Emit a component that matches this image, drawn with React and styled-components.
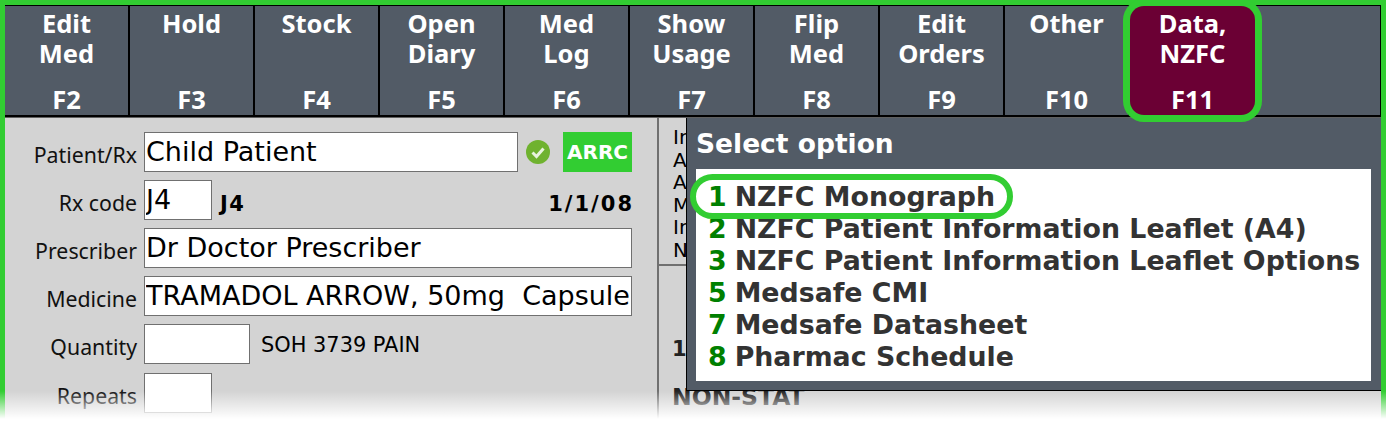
import React from "react";
import styled, { createGlobalStyle } from "styled-components";

const GREEN = "#32cd32";
const SLATE = "#525b66";

const Global = createGlobalStyle`
  html, body {
    margin: 0;
    padding: 0;
    background: white;
  }
`;

const Shell = styled.div`
  position: relative;
  width: 1386px;
  height: 422px;
  overflow: hidden;
`;

const Frame = styled.div`
  position: relative;
  height: 100%;
  box-sizing: border-box;
  display: flex;
  flex-direction: column;
  border: 5px solid ${GREEN};
  border-bottom: none;
  background: #d3d3d3;
  font-family: "DejaVu Sans", Verdana, sans-serif;
  color: black;
`;

const Toolbar = styled.div`
  display: flex;
  flex: none;
  height: 112px;
  box-sizing: border-box;
  background: ${SLATE};
  border-top: 1px solid black;
  border-right: 1px solid black;
  border-bottom: 2px solid black;
`;

const KeyButton = styled.div`
  position: relative;
  box-sizing: border-box;
  width: 125px;
  height: 109px;
  padding: 2px 0 1px;
  display: flex;
  flex-direction: column;
  justify-content: space-between;
  align-items: center;
  text-align: center;
  white-space: pre-line;
  font-family: "Noto Sans", sans-serif;
  font-weight: 700;
  font-size: 25.5px;
  line-height: 30px;
  color: white;
  border-right: ${(p) => (p.$active ? "none" : "2px solid black")};
  background: ${(p) => (p.$active ? "#6b0034" : "transparent")};
  border-radius: ${(p) => (p.$active ? "14px" : "0")};
  box-shadow: ${(p) => (p.$active ? `0 0 0 7px ${GREEN}` : "none")};
  z-index: ${(p) => (p.$active ? 2 : 0)};
`;

const Body = styled.div`
  flex: 1;
  display: flex;
  min-height: 0;
  border-top: 1px solid #606060;
`;

const FormPanel = styled.div`
  flex: none;
  width: 654px;
  box-sizing: border-box;
  padding: 14px 25px 0 0;
  border-right: 2px solid #707070;
  display: flex;
  flex-direction: column;
  gap: 8px;
`;

const Row = styled.div`
  display: flex;
  align-items: center;
  height: 40px;
  flex: none;
  margin-top: ${(p) => (p.$push ? "1px" : "0")};
`;

const Label = styled.div`
  flex: none;
  width: 132px;
  margin-right: 7px;
  padding-top: 6px;
  text-align: right;
  font-family: "Noto Sans", sans-serif;
  font-size: 21.3px;
  line-height: 28px;
  white-space: nowrap;
  color: #111;
`;

const Input = styled.input`
  flex: ${(p) => (p.$w ? "none" : "1")};
  width: ${(p) => (p.$w ? `${p.$w}px` : "auto")};
  min-width: 0;
  height: 40px;
  box-sizing: border-box;
  padding: 0 1px 1px;
  border: 1px solid #707070;
  background: white;
  font-family: "DejaVu Sans", Verdana, sans-serif;
  font-size: 27px;
  color: black;
  outline: none;
`;

const Check = styled.svg`
  flex: none;
  width: 24px;
  height: 24px;
  margin: 0 13px 0 8px;
`;

const Badge = styled.div`
  flex: none;
  width: 69px;
  height: 40px;
  display: flex;
  align-items: center;
  justify-content: center;
  background: ${GREEN};
  color: white;
  font-weight: 700;
  font-size: 20px;
`;

const Code = styled.div`
  margin: 8px 0 0 8px;
  font-weight: 700;
  font-size: 21px;
  letter-spacing: 1.5px;
`;

const DateText = styled(Code)`
  margin-left: auto;
  letter-spacing: 2px;
  margin-right: -2px;
`;

const Soh = styled.div`
  margin: 2px 0 0 11px;
  font-size: 20.9px;
`;

const SidePanel = styled.div`
  flex: 1;
  min-width: 0;
  display: flex;
  flex-direction: column;
`;

const SideTop = styled.div`
  height: 148px;
  flex: none;
  box-sizing: border-box;
  padding: 8px 0 0 14px;
  border-bottom: 2px solid #707070;
  font-size: 20px;
  line-height: 22.6px;
`;

const SideBold = styled.div`
  margin: ${(p) => p.$top}px 0 0 13px;
  font-weight: 700;
  font-size: ${(p) => p.$size}px;
  white-space: nowrap;
  color: #222;
`;

const Popup = styled.div`
  position: absolute;
  left: 681px;
  right: 0;
  top: 113px;
  height: 273px;
  box-sizing: border-box;
  padding: 0 10px 9px 9px;
  display: flex;
  flex-direction: column;
  background: ${SLATE};
  border-left: 1px solid black;
  border-bottom: 1px solid black;
  z-index: 1;
`;

const PopupTitle = styled.div`
  flex: none;
  height: 51px;
  display: flex;
  align-items: center;
  font-weight: 700;
  font-size: 26.5px;
  color: white;
`;

const OptionList = styled.div`
  flex: 1;
  position: relative;
  box-sizing: border-box;
  padding: 12px 0 0 12px;
  background: white;
`;

const Option = styled.div`
  height: 32px;
  line-height: 32px;
  white-space: nowrap;
  font-weight: 700;
  font-size: 26.8px;
  color: #333;
`;

const Num = styled.span`
  color: green;
  margin-right: 8px;
`;

const Pill = styled.div`
  position: absolute;
  left: -6px;
  top: 5px;
  width: 323px;
  height: 45px;
  box-sizing: border-box;
  border: 6px solid ${GREEN};
  border-radius: 24px;
`;

const Fade = styled.div`
  position: absolute;
  left: 0;
  right: 0;
  bottom: 0;
  height: 31px;
  background: linear-gradient(to bottom, rgba(255, 255, 255, 0), white 90%);
  z-index: 3;
`;

const keys = [
  ["Edit\nMed", "F2"],
  ["Hold", "F3"],
  ["Stock", "F4"],
  ["Open\nDiary", "F5"],
  ["Med\nLog", "F6"],
  ["Show\nUsage", "F7"],
  ["Flip\nMed", "F8"],
  ["Edit\nOrders", "F9"],
  ["Other", "F10"],
  ["Data,\nNZFC", "F11"],
];

const options = [
  ["1", "NZFC Monograph"],
  ["2", "NZFC Patient Information Leaflet (A4)"],
  ["3", "NZFC Patient Information Leaflet Options"],
  ["5", "Medsafe CMI"],
  ["7", "Medsafe Datasheet"],
  ["8", "Pharmac Schedule"],
];

const App = () => {
  return (
    <Shell>
      <Global />
      <Frame>
        <Toolbar>
          {keys.map(([name, key]) => (
            <KeyButton key={key} $active={key === "F11"}>
              <div>{name}</div>
              <div>{key}</div>
            </KeyButton>
          ))}
        </Toolbar>
        <Body>
          <FormPanel>
            <Row>
              <Label>Patient/Rx</Label>
              <Input readOnly value="Child Patient" $w={374} />
              <Check viewBox="0 0 24 24">
                <circle cx="12" cy="12" r="12" fill="#6fb22f" />
                <path d="M6.5 12.5l4 4 7-8" fill="none" stroke="#e8f3dc" strokeWidth="3" />
              </Check>
              <Badge>ARRC</Badge>
            </Row>
            <Row>
              <Label>Rx code</Label>
              <Input readOnly value="J4" $w={68} />
              <Code>J4</Code>
              <DateText>1/1/08</DateText>
            </Row>
            <Row>
              <Label>Prescriber</Label>
              <Input readOnly value="Dr Doctor Prescriber" />
            </Row>
            <Row>
              <Label>Medicine</Label>
              <Input readOnly value="TRAMADOL ARROW, 50mg  Capsule" />
            </Row>
            <Row>
              <Label>Quantity</Label>
              <Input readOnly value="" $w={106} />
              <Soh>SOH 3739 PAIN</Soh>
            </Row>
            <Row $push>
              <Label>Repeats</Label>
              <Input readOnly value="" $w={68} />
            </Row>
          </FormPanel>
          <SidePanel>
            <SideTop>
              <div>In</div>
              <div>A</div>
              <div>A</div>
              <div>M</div>
              <div>In</div>
              <div>N</div>
            </SideTop>
            <SideBold $top={71} $size={21}>1</SideBold>
            <SideBold $top={22} $size={23.5}>NON-STAT</SideBold>
          </SidePanel>
        </Body>
        <Popup>
          <PopupTitle>Select option</PopupTitle>
          <OptionList>
            <Pill />
            {options.map(([n, text]) => (
              <Option key={n}>
                <Num>{n}</Num>
                {text}
              </Option>
            ))}
          </OptionList>
        </Popup>
      </Frame>
      <Fade />
    </Shell>
  );
};

export default App;
